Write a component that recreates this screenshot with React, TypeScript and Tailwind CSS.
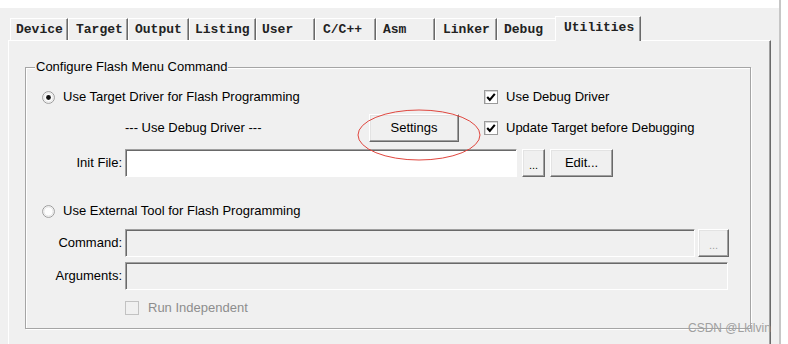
import React from "react";

const Radio = ({ checked }: { checked?: boolean }) => (
  <svg width="13" height="13" viewBox="0 0 13 13" className="shrink-0">
    <circle cx="6.5" cy="6.5" r="5.9" fill="#fdfdfd" stroke="#9a9a9a" strokeWidth="1" />
    <circle cx="6.5" cy="6.5" r="4.6" fill="none" stroke="#e2e2e2" strokeWidth="1" />
    {checked && <circle cx="6.5" cy="6.5" r="2.4" fill="#111" />}
  </svg>
);

const Check = ({ checked, disabled }: { checked?: boolean; disabled?: boolean }) => (
  <div
    className={
      "w-[14px] h-[14px] shrink-0 border flex items-center justify-center " +
      (disabled
        ? "border-[#c2c2c2] bg-[#f0f0f0]"
        : "border-[#9a9a9a] bg-white shadow-[inset_1px_1px_0_#d8d8d8]")
    }
  >
    {checked && (
      <svg width="12" height="12" viewBox="0 0 12 12">
        <path d="M2.2 6 L4.8 8.8 L9.8 2.8" stroke="#000" strokeWidth="2.1" fill="none" />
      </svg>
    )}
  </div>
);

const Button = ({ children, w, disabled }: { children: React.ReactNode; w: string; disabled?: boolean }) => (
  <div
    className={
      w +
      " h-full shrink-0 flex items-center justify-center bg-[#f0f0f0] border border-t-[#ffffff] border-l-[#ffffff] border-r-[#696969] border-b-[#696969] shadow-[inset_-1px_-1px_0_#a0a0a0,inset_1px_1px_0_#e3e3e3] " +
      (disabled ? "text-[#a0a0a0]" : "text-black")
    }
  >
    {children}
  </div>
);

const Field = ({ w, white }: { w: string; white?: boolean }) => (
  <div
    className={
      w +
      " h-full shrink-0 border border-t-[#a0a0a0] border-l-[#a0a0a0] border-r-white border-b-white shadow-[inset_1px_1px_0_#696969] " +
      (white ? "bg-white" : "bg-[#f0f0f0]")
    }
  />
);

const tabs: { label: string; w: string; pl: string }[] = [
  { label: "Device", w: "w-[58px]", pl: "pl-[5px]" },
  { label: "Target", w: "w-[60px]", pl: "pl-[7px]" },
  { label: "Output", w: "w-[61px]", pl: "pl-[6px]" },
  { label: "Listing", w: "w-[67px]", pl: "pl-[5px]" },
  { label: "User", w: "w-[59px]", pl: "pl-[5px]" },
  { label: "C/C++", w: "w-[61px]", pl: "pl-[7px]" },
  { label: "Asm", w: "w-[59px]", pl: "pl-[6px]" },
  { label: "Linker", w: "w-[62px]", pl: "pl-[7px]" },
  { label: "Debug", w: "w-[60px]", pl: "pl-[6px]" },
];

export default function App() {
  return (
    <div className="w-[788px] h-[344px] bg-white relative overflow-hidden flex text-[13px] text-black font-['Liberation_Sans',Arial,sans-serif]">
      <div className="w-[779px] shrink-0 flex flex-col">
        <div className="h-[8px] bg-white" />
        <div className="flex-1 bg-[#f0f0f0] flex flex-col pl-[8px]">
          {/* Tabs */}
          <div className="h-[32px] flex items-end pl-[2px] font-['Liberation_Mono','DejaVu_Sans_Mono',monospace] font-bold text-[13px] leading-none">
            {tabs.map((t) => (
              <div
                key={t.label}
                className={
                  t.w +
                  " " +
                  t.pl +
                  " h-[22px] shrink-0 flex items-center border-t border-l border-t-white border-l-white border-r border-r-[#696969] shadow-[inset_-1px_0_0_#a0a0a0] text-[#222]"
                }
              >
                {t.label}
              </div>
            ))}
            <div className="relative z-10 -ml-[2px] -mb-[1px] w-[86px] h-[25px] shrink-0 flex items-center pl-[8px] pb-[3px] bg-[#f0f0f0] border-t border-l border-t-white border-l-white border-r border-r-[#696969] shadow-[inset_-1px_0_0_#a0a0a0] text-[#222]">
              Utilities
            </div>
          </div>
          {/* Panel */}
          <div className="flex-1 w-[763px] border-t border-l border-t-white border-l-white border-r border-r-[#696969] shadow-[inset_-1px_0_0_#a0a0a0] pt-[26px] pl-[16px]">
            <div className="relative w-[726px] h-[262px] border border-[#a5a5a5] shadow-[inset_1px_1px_0_#fff,1px_1px_0_#fff] flex flex-col">
              <div className="absolute left-[9px] top-[-9px] px-[1px] bg-[#f0f0f0] leading-[16px]">
                Configure Flash Menu Command
              </div>

              {/* Row A */}
              <div className="mt-[20px] h-[18px] flex items-center">
                <div className="w-[458px] shrink-0 flex items-center pl-[16px]">
                  <Radio checked />
                  <span className="ml-[8px]">Use Target Driver for Flash Programming</span>
                </div>
                <Check checked />
                <span className="ml-[8px]">Use Debug Driver</span>
              </div>

              {/* Row B */}
              <div className="mt-[8px] h-[28px] flex items-center">
                <div className="w-[99px] shrink-0" />
                <div className="w-[244px] shrink-0">--- Use Debug Driver ---</div>
                <Button w="w-[90px]">Settings</Button>
                <div className="w-[25px] shrink-0" />
                <Check checked />
                <span className="ml-[8px]">Update Target before Debugging</span>
              </div>

              {/* Row C */}
              <div className="mt-[7px] h-[28px] flex items-center">
                <div className="w-[99px] shrink-0 text-right pr-[3px]">Init File:</div>
                <Field w="w-[392px]" white />
                <div className="w-[5px] shrink-0" />
                <Button w="w-[23px]">
                  <span className="text-[11px] pt-[4px]">...</span>
                </Button>
                <div className="w-[5px] shrink-0" />
                <Button w="w-[63px]">Edit...</Button>
              </div>

              {/* Row D */}
              <div className="mt-[25px] h-[18px] flex items-center pl-[16px]">
                <Radio />
                <span className="ml-[8px]">Use External Tool for Flash Programming</span>
              </div>

              {/* Row E */}
              <div className="mt-[9px] h-[28px] flex items-center">
                <div className="w-[99px] shrink-0 text-right pr-[3px]">Command:</div>
                <Field w="w-[570px]" />
                <div className="w-[3px] shrink-0" />
                <Button w="w-[31px]" disabled>
                  <span className="text-[11px] pt-[4px]">...</span>
                </Button>
              </div>

              {/* Row F */}
              <div className="mt-[5px] h-[28px] flex items-center">
                <div className="w-[99px] shrink-0 text-right pr-[3px]">Arguments:</div>
                <Field w="w-[603px]" />
              </div>

              {/* Row G */}
              <div className="mt-[10px] h-[16px] flex items-center">
                <div className="w-[99px] shrink-0" />
                <Check disabled />
                <span className="ml-[9px] text-[#8d8d8d]">Run Independent</span>
              </div>
            </div>
          </div>
        </div>
      </div>
      <div className="w-[2px] shrink-0 bg-[#c6c6c6]" />
      <div className="flex-1 bg-white" />

      {/* red annotation ellipse */}
      <svg className="absolute left-[356px] top-[108px]" width="126" height="54" viewBox="0 0 126 54">
        <ellipse cx="63" cy="27" rx="61" ry="25" fill="none" stroke="#e0473f" strokeWidth="1" />
      </svg>

      {/* watermark */}
      <div className="absolute left-[688px] top-[320px] text-[12px] leading-[16px] text-[#a0a0a0]">
        CSDN @Lkilvin
      </div>
    </div>
  );
}
